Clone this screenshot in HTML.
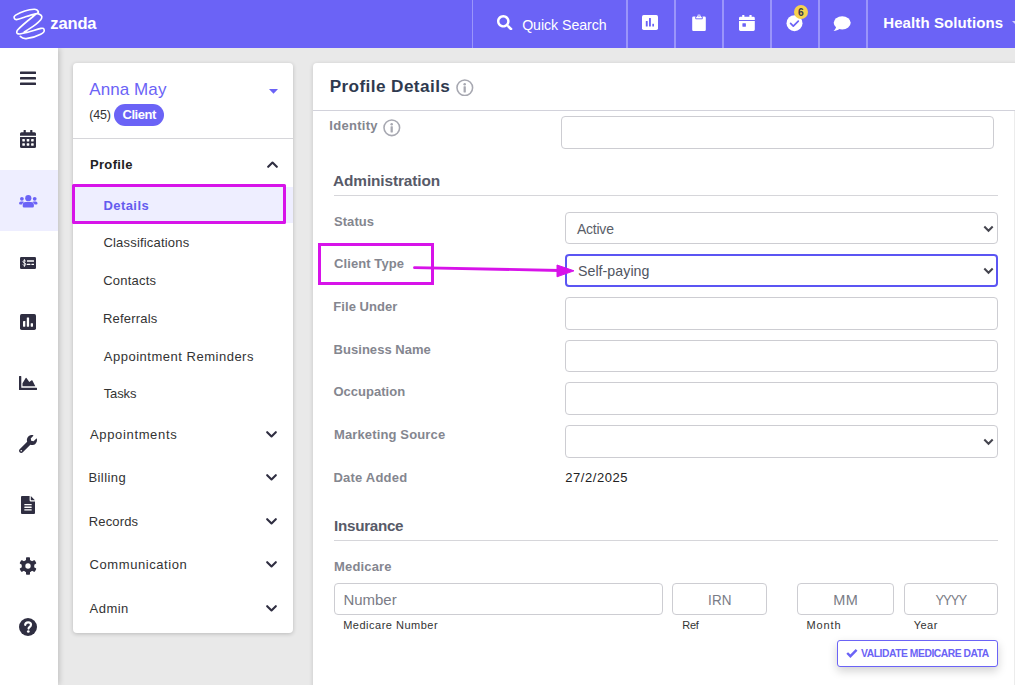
<!DOCTYPE html>
<html>
<head>
<meta charset="utf-8">
<title>Profile Details</title>
<style>
*{box-sizing:border-box;margin:0;padding:0}
html,body{width:1015px;height:685px;overflow:hidden;background:#e9e9e9;font-family:"Liberation Sans",sans-serif;color:#333}
.a,svg{position:absolute}
#hdr{position:absolute;left:0;top:0;width:1015px;height:48px;background:#6b63f6;z-index:3}
.sep{position:absolute;top:0;width:2px;height:48px;background:#9a95fa}
#side{position:absolute;left:0;top:48px;width:58px;height:637px;background:#fff;box-shadow:1px 0 6px rgba(0,0,0,.2)}
#lcard{position:absolute;left:73px;top:63px;width:220px;height:570px;background:#fff;border-radius:4px;box-shadow:0 1px 4px rgba(0,0,0,.2)}
#rcard{position:absolute;left:313px;top:63px;width:720px;height:640px;background:#fff;border-radius:4px 0 0 0;box-shadow:0 1px 4px rgba(0,0,0,.16)}
.inp{position:absolute;border:1px solid #cdcdd2;border-radius:4px;background:#fff}
.hr{position:absolute;height:1px;background:#d6d6da}
.tx{position:absolute;white-space:nowrap;line-height:20px;z-index:5}
</style>
</head>
<body>
<div id="hdr">
<svg style="left:8px;top:4px" width="44" height="40" viewBox="0 0 44 40" fill="none" stroke="#fff" stroke-width="1.650" stroke-linecap="round" stroke-linejoin="round"><path d="M12.250 32.400C14.500 34.600 17 34.900 19.250 34.400C24 33.800 29 32.300 32.700 30.300C35 29 36.500 27.500 36.200 26.250C36 24.500 35.500 24 33 24.400C28 25.500 22 27.800 17.500 28.600C15 29.200 13 30 11.700 30C9.500 30 8.500 29.300 8.750 28C9 26.800 9.300 26.400 9.600 26C14 21 22 15 28 10.200C30 8.800 30.800 8.300 30.300 7.600C29.500 5.800 28 5.200 26.250 5.250C19 5.600 12 8.500 7.600 11.100C6.300 12 5.800 12.900 6.100 13.700C6.500 15 7.300 15.500 8.200 15.600C11 15.800 14.500 13.800 17.500 12.800C21 11.700 24.500 10.600 27.400 9.900C29 9.500 30.500 9.600 31.500 10.200C32.800 10.900 33.600 11.600 33.800 12.500C34 13.600 33.500 14.700 32.700 15.750C28 21.500 21.500 24.500 16.300 28"/></svg>
<div class="sep" style="left:472px;width:1px"></div>
<div class="sep" style="left:626px"></div>
<div class="sep" style="left:674px"></div>
<div class="sep" style="left:722px"></div>
<div class="sep" style="left:770px"></div>
<div class="sep" style="left:818px"></div>
<div class="sep" style="left:866px"></div>
<svg style="left:497px;top:14.500px" width="15.500" height="15.500" viewBox="0 0 512 512" fill="#fff"><path d="M505 442.700L405.300 343c-4.500-4.500-10.600-7-17-7H372c27.600-35.300 44-79.700 44-128C416 93.100 322.900 0 208 0S0 93.100 0 208s93.100 208 208 208c48.300 0 92.700-16.400 128-44v16.300c0 6.400 2.500 12.500 7 17l99.700 99.700c9.400 9.400 24.600 9.400 33.900 0l28.300-28.300c9.400-9.400 9.400-24.600.1-34zM208 336c-70.700 0-128-57.200-128-128 0-70.700 57.200-128 128-128 70.700 0 128 57.200 128 128 0 70.700-57.200 128-128 128z"/></svg>
<svg style="left:642px;top:15px" width="16" height="15" viewBox="0 0 16 15"><rect width="16" height="15" rx="1.700" fill="#fff"/><g fill="#6b63f6"><rect x="3.800" y="6" width="1.900" height="5.600" rx=".3"/><rect x="7" y="2.900" width="1.900" height="8.700" rx=".3"/><rect x="10.300" y="8.700" width="1.700" height="2.900" rx=".3"/></g></svg>
<svg style="left:692px;top:14px" width="14" height="17" viewBox="0 0 14 17"><path d="M1.400 2.600h11.200a1.200 1.200 0 0 1 1.200 1.200v12a1.200 1.200 0 0 1-1.200 1.200H1.400A1.200 1.200 0 0 1 .2 15.800v-12a1.200 1.200 0 0 1 1.200-1.200z" fill="#fff"/><path d="M7 0a2 2 0 0 1 2 2v.4h1.300v2.400H3.700V2.400H5V2a2 2 0 0 1 2-2z" fill="#fff" stroke="#6b63f6" stroke-width=".9"/><circle cx="7" cy="2" r=".75" fill="#6b63f6"/></svg>
<svg style="left:739px;top:15px" width="16" height="16" viewBox="0 0 16 16" fill="#fff"><rect x="3.200" y="0" width="2.200" height="3.500" rx=".5"/><rect x="10.400" y="0" width="2.200" height="3.500" rx=".5"/><path d="M1.400 1.800h13a1.400 1.400 0 0 1 1.400 1.400v1.700H0V3.200a1.400 1.400 0 0 1 1.400-1.400z"/><path d="M0 6h15.800v8.600a1.400 1.400 0 0 1-1.400 1.400h-13A1.400 1.400 0 0 1 0 14.600z"/><rect x="3.400" y="8.300" width="3.500" height="3.400" rx=".4" fill="#6b63f6"/></svg>
<svg style="left:786px;top:15px" width="17" height="17" viewBox="0 0 17 17"><circle cx="8.500" cy="8.200" r="8" fill="#fff"/><path d="M4.600 8.400l2.700 2.700 5-5" fill="none" stroke="#6b63f6" stroke-width="1.700" stroke-linecap="round" stroke-linejoin="round"/></svg>
<div class="a" style="left:794px;top:5px;width:14px;height:14px;border-radius:7px;background:#f6d24f"></div>
<svg style="left:833.200px;top:15.800px" width="18" height="16" viewBox="0 0 18 16" fill="#fff"><ellipse cx="9.200" cy="6.800" rx="8.500" ry="6.600"/><path d="M3.200 10.500C2.800 12.600 1.600 14 .5 15c2.500 0 4.600-.9 6-2.200z"/></svg>
<svg style="left:1011.500px;top:21px" width="8" height="4" viewBox="0 0 8 4" fill="#cfccfc"><path d="M0 0h8L4 4z"/></svg>
</div>
<div id="side">
<div class="a" style="left:0;top:122px;width:58px;height:61px;background:#eeeeff"></div>
<svg style="left:20px;top:23px" width="16" height="15" viewBox="0 0 16 15" fill="#2f2e41"><rect x="0" y="0.400" width="16" height="2.600" rx=".6"/><rect x="0" y="6" width="16" height="2.600" rx=".6"/><rect x="0" y="11.500" width="16" height="2.600" rx=".6"/></svg>
<svg style="left:20px;top:82px" width="16" height="18" viewBox="0 0 16 18" fill="#2f2e41"><rect x="3.600" y="0" width="2.200" height="4" rx=".5"/><rect x="10.200" y="0" width="2.200" height="4" rx=".5"/><path d="M1.500 2.300h13a1.500 1.500 0 0 1 1.500 1.500v1.900H0V3.800a1.500 1.500 0 0 1 1.500-1.500z"/><path d="M0 6.900h16v9.600a1.500 1.500 0 0 1-1.500 1.500h-13A1.500 1.500 0 0 1 0 16.500z"/><g fill="#fff"><rect x="2.300" y="9" width="2.600" height="2.400" rx=".4"/><rect x="6.700" y="9" width="2.600" height="2.400" rx=".4"/><rect x="11.100" y="9" width="2.600" height="2.400" rx=".4"/><rect x="2.300" y="13.300" width="2.600" height="2.400" rx=".4"/><rect x="6.700" y="13.300" width="2.600" height="2.400" rx=".4"/><rect x="11.100" y="13.300" width="2.600" height="2.400" rx=".4"/></g></svg>
<svg style="left:19px;top:147px" width="19" height="13" viewBox="0 0 19 13" fill="#6b63f6"><circle cx="9.300" cy="3.200" r="3.100"/><path d="M6.600 7.100h5.400a2.900 2.900 0 0 1 2.900 2.900v1.300a1.300 1.300 0 0 1-1.300 1.300H5a1.300 1.300 0 0 1-1.300-1.300V10a2.900 2.900 0 0 1 2.900-2.900z"/><circle cx="2.900" cy="3.800" r="1.900"/><circle cx="15.700" cy="3.800" r="1.900"/><path d="M1.900 6.400h2a2 2 0 0 1 1.300.5A4.300 4.300 0 0 0 3 9.500H1.100A1 1 0 0 1 .1 8.500V8.200a1.800 1.800 0 0 1 1.800-1.800z"/><path d="M16.700 6.400h-2a2 2 0 0 0-1.300.5 4.300 4.300 0 0 1 2.200 2.600h1.900a1 1 0 0 0 1-1V8.200a1.800 1.800 0 0 0-1.800-1.800z"/></svg>
<svg style="left:20px;top:209px" width="16" height="12" viewBox="0 0 16 12"><rect x="0" y="0" width="16" height="12" rx="1.200" fill="#2f2e41"/><g fill="#fff"><rect x="7" y="3.200" width="7" height="1.500" rx=".3"/><rect x="7" y="6.800" width="3.400" height="1.300" rx=".3"/><rect x="11.400" y="6.800" width="2.600" height="1.300" rx=".3"/><path d="M4.400 2v8" stroke="#fff" stroke-width=".8"/><path d="M5.800 4.300C5.300 3.300 3 3.300 3 4.700 3 6.300 5.900 5.700 5.900 7.300c0 1.500-2.600 1.400-3 .2" fill="none" stroke="#fff" stroke-width="1"/></g></svg>
<svg style="left:20px;top:266px" width="16" height="16" viewBox="0 0 16 16"><rect x="0" y="0" width="16" height="16" rx="1.700" fill="#2f2e41"/><g fill="#fff"><rect x="3" y="7" width="2.300" height="5.700" rx=".4"/><rect x="6.800" y="3.400" width="2.300" height="9.300" rx=".4"/><rect x="10.700" y="9.200" width="2.300" height="3.500" rx=".4"/></g></svg>
<svg style="left:19px;top:328px" width="18" height="14" viewBox="0 0 18 14" fill="#2f2e41"><path d="M0 .5a.5.500 0 0 1 .5-.5h1.300a.5.500 0 0 1 .5.500v11.200h15.200a.5.500 0 0 1 .5.500v1.300a.5.500 0 0 1-.5.500H.5a.5.500 0 0 1-.5-.5z"/><path d="M3.500 10.200V7.300l3.200-5.200a.5.500 0 0 1 .8 0l2.800 4 2.400-1.800a.5.500 0 0 1 .7.100l2.900 5.800z"/></svg>
<svg style="left:19px;top:387px" width="18" height="18" viewBox="0 0 512 512" fill="#2f2e41"><path d="M507.700 109.100c-2.200-9-13.500-12.100-20.100-5.500l-74.400 74.400-67.900-11.300-11.300-67.900 74.400-74.400c6.600-6.600 3.400-17.900-5.700-20.200-47.400-11.700-99.600.9-136.600 37.900-39.600 39.600-50.600 97.100-34.100 147.200L18.700 402.800c-25 25-25 65.500 0 90.500s65.500 25 90.500 0l213.200-213.200c50.100 16.700 107.500 5.700 147.400-34.200 37.100-37.100 49.700-89.300 37.900-136.800zM64 472c-13.200 0-24-10.800-24-24 0-13.300 10.700-24 24-24s24 10.700 24 24c0 13.200-10.700 24-24 24z"/></svg>
<svg style="left:21px;top:448px" width="14" height="18" viewBox="0 0 14 18"><path d="M1 0h7.600v4.200a1.200 1.200 0 0 0 1.200 1.200H14v11.600a1 1 0 0 1-1 1H1a1 1 0 0 1-1-1V1a1 1 0 0 1 1-1z" fill="#2f2e41"/><path d="M9.800 0.100L13.900 4.200H10.300a.5.500 0 0 1-.5-.5z" fill="#2f2e41"/><g fill="#fff"><rect x="3.300" y="8" width="7.400" height="1.300" rx=".3"/><rect x="3.300" y="10.600" width="7.400" height="1.300" rx=".3"/><rect x="3.300" y="13.200" width="7.400" height="1.300" rx=".3"/></g></svg>
<svg style="left:19px;top:509px" width="18" height="18" viewBox="-9 -9 18 18"><g fill="#2f2e41"><circle r="6.300"/><rect x="-2" y="-8.700" width="4" height="4" rx=".8" transform="rotate(0)"/><rect x="-2" y="-8.700" width="4" height="4" rx=".8" transform="rotate(60)"/><rect x="-2" y="-8.700" width="4" height="4" rx=".8" transform="rotate(120)"/><rect x="-2" y="-8.700" width="4" height="4" rx=".8" transform="rotate(180)"/><rect x="-2" y="-8.700" width="4" height="4" rx=".8" transform="rotate(240)"/><rect x="-2" y="-8.700" width="4" height="4" rx=".8" transform="rotate(300)"/></g><circle r="2.700" fill="#fff"/></svg>
<svg style="left:19px;top:570px" width="18" height="18" viewBox="0 0 18 18"><circle cx="9" cy="9" r="9" fill="#2f2e41"/><path d="M6.200 6.900C6.300 5.200 7.500 4.300 9.100 4.300c1.700 0 2.900 1 2.900 2.500 0 1.300-.8 1.900-1.600 2.400-.6.400-.8.700-.8 1.400" fill="none" stroke="#fff" stroke-width="2.200" stroke-linecap="round"/><circle cx="9.300" cy="13.500" r="1.350" fill="#fff"/></svg>
</div>
<div id="lcard">
<svg style="left:195.7px;top:26.2px" width="9" height="5" viewBox="0 0 9 5" fill="#6b63f6"><path d="M0 0h9L4.500 4.800z"/></svg>
<div class="a" style="left:41px;top:41px;width:50px;height:22px;border-radius:11px;background:#6b63f6"></div>
<div class="hr" style="left:0;top:75px;width:220px"></div>
<svg style="left:193.5px;top:98.3px" width="11" height="7" viewBox="0 0 11 7" fill="none" stroke="#2f2e41" stroke-width="2.1" stroke-linecap="round" stroke-linejoin="round"><path d="M1.2 5.8L5.5 1.5 9.8 5.8"/></svg>
<div class="a" style="left:0;top:124px;width:220px;height:36px;background:#eeeeff"></div>
<svg style="left:193.3px;top:368.1px" width="11" height="7" viewBox="0 0 11 7" fill="none" stroke="#2f2e41" stroke-width="2.1" stroke-linecap="round" stroke-linejoin="round"><path d="M1.2 1.2L5.5 5.5 9.8 1.2"/></svg>
<svg style="left:193.3px;top:411.4px" width="11" height="7" viewBox="0 0 11 7" fill="none" stroke="#2f2e41" stroke-width="2.1" stroke-linecap="round" stroke-linejoin="round"><path d="M1.2 1.2L5.5 5.5 9.8 1.2"/></svg>
<svg style="left:193.3px;top:454.8px" width="11" height="7" viewBox="0 0 11 7" fill="none" stroke="#2f2e41" stroke-width="2.1" stroke-linecap="round" stroke-linejoin="round"><path d="M1.2 1.2L5.5 5.5 9.8 1.2"/></svg>
<svg style="left:193.3px;top:498.1px" width="11" height="7" viewBox="0 0 11 7" fill="none" stroke="#2f2e41" stroke-width="2.1" stroke-linecap="round" stroke-linejoin="round"><path d="M1.2 1.2L5.5 5.5 9.8 1.2"/></svg>
<svg style="left:193.3px;top:541.6px" width="11" height="7" viewBox="0 0 11 7" fill="none" stroke="#2f2e41" stroke-width="2.1" stroke-linecap="round" stroke-linejoin="round"><path d="M1.2 1.2L5.5 5.5 9.8 1.2"/></svg>
</div>
<div class="a" style="left:72px;top:184px;width:213.500px;height:39.500px;border:3px solid #d713e9;border-radius:1.500px"></div>
<div id="rcard">
<svg style="left:143px;top:15.7px" width="17.600" height="17.600" viewBox="0 0 17 17"><circle cx="8.500" cy="8.500" r="7.550" fill="none" stroke="#a7a8b1" stroke-width="1.500"/><circle cx="8.400" cy="5" r="1.200" fill="#a7a8b1"/><rect x="7.300" y="7" width="2.200" height="6" rx=".4" fill="#a7a8b1"/></svg>
<div class="hr" style="left:0;top:47px;width:720px;background:#d2d2db"></div>
<div class="a" style="left:701px;top:48px;width:1px;height:600px;background:#ececec"></div>
<svg style="left:70.1px;top:56px" width="17.600" height="17.600" viewBox="0 0 17 17"><circle cx="8.500" cy="8.500" r="7.550" fill="none" stroke="#a7a8b1" stroke-width="1.500"/><circle cx="8.400" cy="5" r="1.200" fill="#a7a8b1"/><rect x="7.300" y="7" width="2.200" height="6" rx=".4" fill="#a7a8b1"/></svg>
<div class="inp" style="left:248px;top:53px;width:433px;height:33px"></div>
<div class="hr" style="left:21px;top:132px;width:664px"></div>
<div class="inp" style="left:252px;top:149px;width:433px;height:32px"></div>
<svg style="left:669.5px;top:161.6px" width="11" height="8" viewBox="0 0 11 8" fill="none" stroke="#45454f" stroke-width="2.050"><path d="M1.3 1.5L5.500 5.700 9.700 1.500"/></svg>
<div class="inp" style="left:252px;top:191px;width:433px;height:33px;border:2px solid #5b55f3"></div>
<svg style="left:669.5px;top:203.6px" width="11" height="8" viewBox="0 0 11 8" fill="none" stroke="#45454f" stroke-width="2.050"><path d="M1.3 1.5L5.500 5.700 9.700 1.500"/></svg>
<div class="inp" style="left:252px;top:234px;width:433px;height:33px"></div>
<div class="inp" style="left:252px;top:277px;width:433px;height:32px"></div>
<div class="inp" style="left:252px;top:319px;width:433px;height:33px"></div>
<div class="inp" style="left:252px;top:362px;width:433px;height:33px"></div>
<svg style="left:669.5px;top:374.6px" width="11" height="8" viewBox="0 0 11 8" fill="none" stroke="#45454f" stroke-width="2.050"><path d="M1.3 1.5L5.500 5.700 9.700 1.500"/></svg>
<div class="hr" style="left:21px;top:477px;width:664px"></div>
<div class="inp" style="left:21px;top:520px;width:329px;height:32px"></div>
<div class="inp" style="left:359px;top:520px;width:95px;height:32px"></div>
<div class="inp" style="left:484px;top:520px;width:96.5px;height:32px"></div>
<div class="inp" style="left:591px;top:520px;width:94px;height:32px"></div>
<div class="a" style="left:524px;top:577px;width:161px;height:26.500px;border:1px solid #6b63f6;border-radius:3px;background:#fff;box-shadow:0 4px 10px rgba(0,0,0,.18)"></div>
<svg style="left:532.6px;top:585px" width="12" height="10" viewBox="0 0 12 10" fill="none" stroke="#6b63f6" stroke-width="2.400"><path d="M1.200 5l3.200 3.200L10.600 1.800"/></svg>
</div>
<div class="a" style="left:318px;top:243px;width:116px;height:42px;border:3px solid #d713e9"></div>
<svg style="left:410px;top:255px" width="170" height="30" viewBox="0 0 170 30"><path d="M4.500 12.600L150 15.500" stroke="#d713e9" stroke-width="2.800" stroke-linecap="round"/><path d="M147 10L164 15.800 147 21.800z" fill="#d713e9" stroke="#d713e9" stroke-width="1" stroke-linejoin="round"/></svg>
<div class="tx" id="t-zanda" style="left:50.30px;top:12.71px;font-size:16.5px;color:#fff;font-weight:bold;letter-spacing:-0.14px">zanda</div>
<div class="tx" id="t-qs" style="left:522.15px;top:14.81px;font-size:14.2px;color:#fff;letter-spacing:-0.06px">Quick Search</div>
<div class="tx" id="t-hs" style="left:883.25px;top:12.91px;font-size:15px;color:#fff;font-weight:bold;letter-spacing:0.10px">Health Solutions</div>
<div class="tx" id="t-b6" style="left:797.95px;top:2.60px;font-size:10.3px;color:#3a3948;font-weight:bold">6</div>
<div class="tx" id="t-anna" style="left:89.30px;top:80.00px;font-size:17px;color:#6b63f6;letter-spacing:0.08px">Anna May</div>
<div class="tx" id="t-n45" style="left:89.35px;top:105.00px;font-size:12.5px;color:#333;letter-spacing:-0.22px">(45)</div>
<div class="tx" id="t-client" style="left:122.55px;top:105.00px;font-size:13px;color:#fff;font-weight:bold;letter-spacing:-0.48px">Client</div>
<div class="tx" id="t-profile" style="left:89.95px;top:155.31px;font-size:13px;color:#222;font-weight:bold;letter-spacing:0.35px">Profile</div>
<div class="tx" id="t-details" style="left:103.55px;top:196.21px;font-size:13px;color:#645cee;font-weight:bold;letter-spacing:0.41px">Details</div>
<div class="tx" id="t-l1" style="left:103.45px;top:233.31px;font-size:13px;color:#333;letter-spacing:0.19px">Classifications</div>
<div class="tx" id="t-l2" style="left:103.25px;top:271.41px;font-size:13px;color:#333;letter-spacing:0.22px">Contacts</div>
<div class="tx" id="t-l3" style="left:103.00px;top:309.00px;font-size:13px;color:#333;letter-spacing:0.20px">Referrals</div>
<div class="tx" id="t-l4" style="left:103.80px;top:346.50px;font-size:13px;color:#333;letter-spacing:0.51px">Appointment Reminders</div>
<div class="tx" id="t-l5" style="left:103.70px;top:384.00px;font-size:13px;color:#333;letter-spacing:-0.11px">Tasks</div>
<div class="tx" id="t-m1" style="left:90.00px;top:424.91px;font-size:13px;color:#333;letter-spacing:0.65px">Appointments</div>
<div class="tx" id="t-m2" style="left:88.45px;top:468.10px;font-size:13px;color:#333;letter-spacing:0.42px">Billing</div>
<div class="tx" id="t-m3" style="left:88.85px;top:512.00px;font-size:13px;color:#333;letter-spacing:0.13px">Records</div>
<div class="tx" id="t-m4" style="left:89.60px;top:554.91px;font-size:13px;color:#333;letter-spacing:0.57px">Communication</div>
<div class="tx" id="t-m5" style="left:89.60px;top:599.00px;font-size:13px;color:#333;letter-spacing:0.47px">Admin</div>
<div class="tx" id="t-pd" style="left:329.65px;top:76.00px;font-size:17.2px;color:#2f3a4f;font-weight:bold;letter-spacing:0.40px">Profile Details</div>
<div class="tx" id="t-ident" style="left:329.35px;top:116.10px;font-size:13px;color:#84868f;font-weight:bold;letter-spacing:0.28px">Identity</div>
<div class="tx" id="t-adm" style="left:333.10px;top:171.01px;font-size:15.4px;color:#575a68;font-weight:bold;letter-spacing:-0.12px">Administration</div>
<div class="tx" id="t-r1" style="left:334.00px;top:212.10px;font-size:13px;color:#84868f;font-weight:bold;letter-spacing:0.05px">Status</div>
<div class="tx" id="t-r2" style="left:334.00px;top:254.10px;font-size:13px;color:#84868f;font-weight:bold;letter-spacing:0.09px">Client Type</div>
<div class="tx" id="t-r3" style="left:333.35px;top:297.00px;font-size:13px;color:#84868f;font-weight:bold;letter-spacing:0.04px">File Under</div>
<div class="tx" id="t-r4" style="left:333.55px;top:340.00px;font-size:13px;color:#84868f;font-weight:bold;letter-spacing:0.04px">Business Name</div>
<div class="tx" id="t-r5" style="left:333.50px;top:382.10px;font-size:13px;color:#84868f;font-weight:bold;letter-spacing:0.01px">Occupation</div>
<div class="tx" id="t-r6" style="left:333.95px;top:425.00px;font-size:13px;color:#84868f;font-weight:bold;letter-spacing:0.14px">Marketing Source</div>
<div class="tx" id="t-r7" style="left:333.45px;top:468.00px;font-size:13px;color:#84868f;font-weight:bold;letter-spacing:0.21px">Date Added</div>
<div class="tx" id="t-date" style="left:565.30px;top:468.31px;font-size:13px;color:#222;letter-spacing:0.54px">27/2/2025</div>
<div class="tx" id="t-ins" style="left:334.10px;top:516.00px;font-size:15.2px;color:#575a68;font-weight:bold;letter-spacing:-0.29px">Insurance</div>
<div class="tx" id="t-medi" style="left:334.00px;top:557.00px;font-size:13px;color:#84868f;font-weight:bold;letter-spacing:0.16px">Medicare</div>
<div class="tx" id="t-active" style="left:576.95px;top:219.00px;font-size:14px;color:#5a5e69;letter-spacing:-0.23px">Active</div>
<div class="tx" id="t-selfp" style="left:577.95px;top:260.61px;font-size:14.2px;color:#50555f;letter-spacing:0.05px">Self-paying</div>
<div class="tx" id="t-num" style="left:343.45px;top:590.41px;font-size:15px;color:#7a7c86;letter-spacing:-0.02px">Number</div>
<div class="tx" id="t-irn" style="left:708.00px;top:590.91px;font-size:13.5px;color:#7a7c86;letter-spacing:0.18px;transform-origin:0 13.99px;transform:scaleY(1.15)">IRN</div>
<div class="tx" id="t-mm" style="left:833.25px;top:589.92px;font-size:14.5px;color:#7a7c86;letter-spacing:0.30px;transform-origin:0 14.98px;transform:scaleY(1.07)">MM</div>
<div class="tx" id="t-yyyy" style="left:935.40px;top:590.92px;font-size:13px;color:#7a7c86;letter-spacing:-0.96px;transform-origin:0 13.98px;transform:scaleY(1.18)">YYYY</div>
<div class="tx" id="t-s1" style="left:343.20px;top:615.21px;font-size:11px;color:#333;letter-spacing:0.50px">Medicare Number</div>
<div class="tx" id="t-s2" style="left:682.30px;top:614.91px;font-size:11px;color:#333;letter-spacing:-0.34px">Ref</div>
<div class="tx" id="t-s3" style="left:806.50px;top:614.91px;font-size:11px;color:#333;letter-spacing:0.86px">Month</div>
<div class="tx" id="t-s4" style="left:913.75px;top:614.91px;font-size:11px;color:#333;letter-spacing:0.45px">Year</div>
<div class="tx" id="t-val" style="left:861.10px;top:644.20px;font-size:10.3px;color:#6b63f6;font-weight:bold;letter-spacing:-0.45px">VALIDATE MEDICARE DATA</div>
</body>
</html>
